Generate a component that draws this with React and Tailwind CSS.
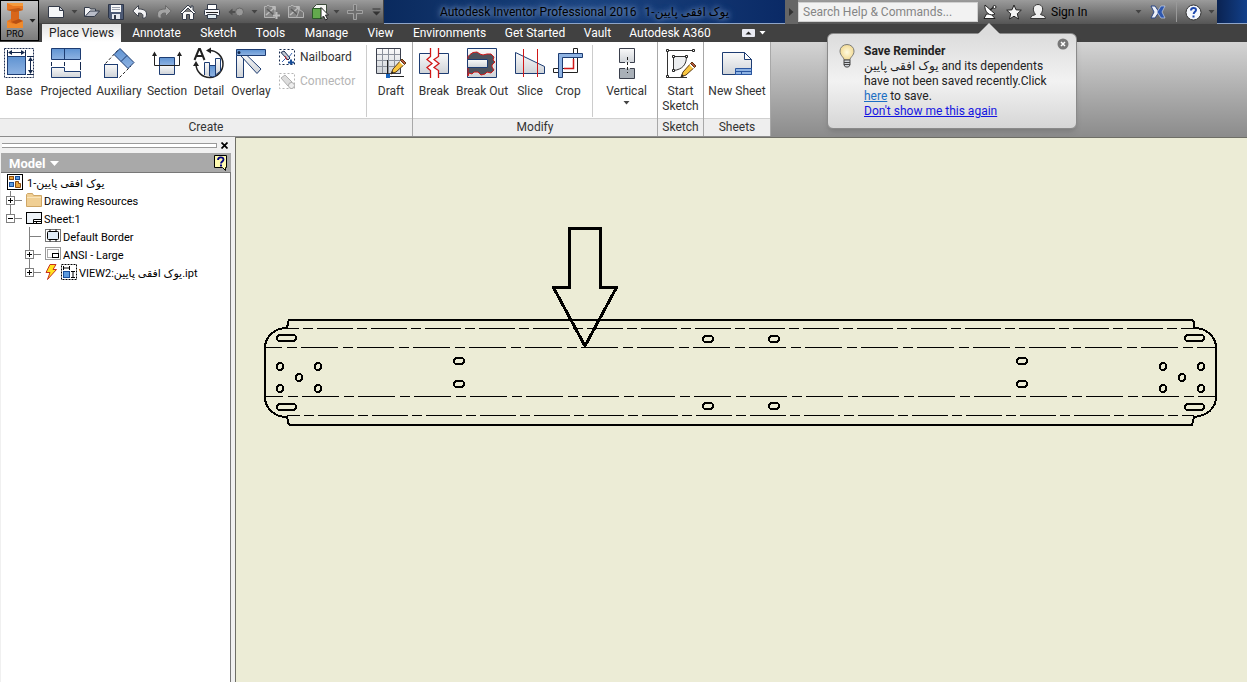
import React from 'react';
import clsx from 'clsx';

const FILE_NAME = 'یوک افقی پایین';

const TABS = [
    { label: 'Annotate', width: 'w-[69px]' },
    { label: 'Sketch', width: 'w-[55px]' },
    { label: 'Tools', width: 'w-[49px]' },
    { label: 'Manage', width: 'w-[63px]' },
    { label: 'View', width: 'w-[45px]' },
    { label: 'Environments', width: 'w-[93px]' },
    { label: 'Get Started', width: 'w-[78px]' },
    { label: 'Vault', width: 'w-[47px]' },
    { label: 'Autodesk A360', width: 'w-[98px]' },
];

function App() {
    return (
        <div className="min-h-screen flex flex-col bg-[#f0f0f0] text-[#333] font-['Roboto','DejaVu_Sans',sans-serif] text-[12px] leading-[15px] overflow-hidden">
            <Header />
            <Ribbon />
            <div className="flex-1 flex min-h-0">
                <ModelBrowser />
                <main className="flex-1 bg-[#ececd6] border-l border-t border-[#6e6e66]">
                    <SheetDrawing />
                </main>
            </div>
        </div>
    );
}

/* ---------- Title bar and tabs ---------- */

function Header() {
    return (
        <header className="relative flex h-[42px] shrink-0 bg-[#414141]">
            <button aria-label="Application menu" className="w-[39px] h-[41px] shrink-0 border border-black bg-linear-to-b from-[#c4c4c4] to-[#7b7b7b] flex items-center">
                <span className="w-7 flex flex-col items-center">
                    <svg width="18" height="27" viewBox="0 0 18 27">
                        <path d="M1 1h16v7l-4 1v8l4 2v7H1v-7l4-2V9L1 8z" fill="#e87722" />
                        <path d="M1 1l6 3h10V1z" fill="#f59a3c" />
                        <path d="M5 9l8-3v12l-8 2z" fill="#d9661a" />
                        <path d="M1 19l6 3 10-3v7H1z" fill="#f08a2c" />
                        <path d="M1 8l5-1 7-1 4 2-4 1-4 1z" fill="#c25a16" />
                        <path d="M13 17l4 2-7 3-5-2z" fill="#b84f12" />
                    </svg>
                    <span className="text-[9px] leading-[10px] text-black">PRO</span>
                </span>
                <Caret className="text-[#222]" />
            </button>
            <div className="flex-1 flex flex-col min-w-0">
                <div className="h-6 flex bg-[#0b2a63]">
                    <QuickAccess />
                    <div className="flex-1 flex items-center justify-center gap-2 pt-[2px] text-black border-b border-[#8fa5c8] bg-linear-to-r from-[#0a2a5e] via-[#1c437e] to-[#0a2a66] whitespace-nowrap [text-shadow:0_0_5px_#8ea9d2,0_0_9px_#7f9cca]">
                        <h1>Autodesk Inventor Professional 2016</h1>
                        <span dir="rtl">{FILE_NAME}-1</span>
                    </div>
                    <InfoCenter />
                    <div className="w-[30px] border-b border-[#8fa5c8] bg-linear-to-r from-[#0a2352] to-[#12408a]" />
                </div>
                <nav className="h-[18px] flex items-center pl-[3px] text-white whitespace-nowrap">
                    <button className="w-[79px] h-[18px] mr-px bg-linear-to-b from-[#e2e2e2] to-white text-[#222]">Place Views</button>
                    {TABS.map((tab) => (
                        <button key={tab.label} className={clsx('h-[18px]', tab.width)}>{tab.label}</button>
                    ))}
                    <button aria-label="Minimize ribbon" className="ml-[23px] flex items-center gap-1">
                        <svg width="13" height="8" viewBox="0 0 13 8">
                            <rect width="13" height="8" rx="1" fill="#e9eaf2" />
                            <path d="M3.5 5.5h6l-3-3z" fill="#222" />
                        </svg>
                        <Caret className="text-white" />
                    </button>
                </nav>
            </div>
            <SaveReminder />
        </header>
    );
}

function Caret({ className }) {
    return (
        <svg width="7" height="4" viewBox="0 0 7 4" className={clsx('shrink-0', className)}>
            <path d="M0.5 0h6L3.5 3.5z" fill="currentColor" />
        </svg>
    );
}

function ToolButton({ label, children, className = 'w-6' }) {
    return (
        <button aria-label={label} className={clsx('h-full shrink-0 flex items-center justify-center', className)}>
            {children}
        </button>
    );
}

function QuickAccess() {
    return (
        <div className="w-[345px] shrink-0 pl-[5px] flex items-center bg-linear-to-b from-[#9b9b9b] to-[#555] border-b border-r border-[#444]">
            <ToolButton label="New"><NewIcon /></ToolButton>
            <ToolButton label="New options" className="w-3"><Caret className="text-[#444]" /></ToolButton>
            <ToolButton label="Open"><OpenIcon /></ToolButton>
            <ToolButton label="Save"><SaveIcon /></ToolButton>
            <ToolButton label="Undo"><UndoIcon /></ToolButton>
            <ToolButton label="Redo"><RedoIcon /></ToolButton>
            <ToolButton label="Home"><HomeIcon /></ToolButton>
            <ToolButton label="Print"><PrintIcon /></ToolButton>
            <ToolButton label="Return"><ReturnIcon /></ToolButton>
            <ToolButton label="Return options" className="w-3"><Caret className="text-[#444]" /></ToolButton>
            <ToolButton label="Update"><UpdateIcon plus /></ToolButton>
            <ToolButton label="Update all"><UpdateIcon /></ToolButton>
            <ToolButton label="Select"><SelectIcon /></ToolButton>
            <ToolButton label="Select options" className="w-2"><Caret className="text-[#444]" /></ToolButton>
            <ToolButton label="Add" className="w-[30px]"><PlusIcon /></ToolButton>
            <ToolButton label="Customize" className="w-3">
                <svg width="9" height="8" viewBox="0 0 9 8"><path d="M0.5 1h8" stroke="#333" /><path d="M0.5 3.5h8l-4 4z" fill="#333" /></svg>
            </ToolButton>
        </div>
    );
}

function NewIcon() {
    return (
        <svg width="18" height="16" viewBox="0 0 18 16">
            <path d="M1.500 2.500h11l4 4v7h-15z" fill="#f5f6f8" stroke="#333a48" />
            <path d="M12.500 2.500v4h4z" fill="#cdd0d8" stroke="#333a48" />
        </svg>
    );
}

function OpenIcon() {
    return (
        <svg width="16" height="16" viewBox="0 0 16 16">
            <path d="M0.500 12.500v-9h5l1 1.500h5v2.500l-6 5z" fill="#f1f2f5" stroke="#333a48" />
            <path d="M1 12.500l5-5.500h9.500l-5 5.500z" fill="#b9bdc8" stroke="#333a48" />
        </svg>
    );
}

function SaveIcon() {
    return (
        <svg width="16" height="16" viewBox="0 0 16 16">
            <path d="M0.5 0.5h15v15h-13l-2-2z" fill="#4d5a75" stroke="#2d3547" />
            <rect x="3" y="1" width="10" height="7" fill="#f7f7f7" />
            <path d="M4 3.500h8M4 5.500h8" stroke="#9aa0ad" />
            <rect x="4" y="10" width="8" height="5" fill="#e6e8ee" />
            <rect x="6" y="11" width="2" height="4" fill="#333a48" />
        </svg>
    );
}

function UndoIcon() {
    return (
        <svg width="16" height="16" viewBox="0 0 16 16">
            <path d="M6.500 1.500v3.500c5 0 8 1.500 8 5 0 2-.5 3-1.500 4h-2.500c1-3 .5-5-4-5v3.500L0.800 7z" fill="#f3f3f5" stroke="#3f434c" />
        </svg>
    );
}

function RedoIcon() {
    return (
        <svg width="16" height="16" viewBox="0 0 16 16">
            <path d="M9.500 1.500v3.500c-5 0-8 1.500-8 5 0 2 .5 3 1.500 4h2.500c-1-3-.5-5 4-5v3.500L15.200 7z" fill="#a4a4a4" stroke="#6a6a6a" />
        </svg>
    );
}

function HomeIcon() {
    return (
        <svg width="16" height="16" viewBox="0 0 16 16">
            <path d="M2.500 8v7.500h4v-5h3v5h4V8" fill="#f7f7f7" stroke="#333a48" />
            <path d="M0.500 8.500L8 1l3 3V2h2v4l2.500 2.500-1.500 1.500L8 4l-6 6z" fill="#f7f7f7" stroke="#333a48" />
        </svg>
    );
}

function PrintIcon() {
    return (
        <svg width="16" height="16" viewBox="0 0 16 16">
            <path d="M3.500 6V0.500h9V6" fill="#fff" stroke="#333a48" />
            <rect x="0.500" y="5.500" width="15" height="6" rx="1" fill="#f4f5f8" stroke="#333a48" />
            <path d="M2 8.500h12" stroke="#222" />
            <path d="M3.500 10.500h9v4h-9z" fill="#dfeaf0" stroke="#333a48" />
        </svg>
    );
}

function ReturnIcon() {
    return (
        <svg width="16" height="16" viewBox="0 0 16 16">
            <path d="M0.500 8l4-3.500v2.500h3v2h-3v2.500z" fill="#4f4f4f" />
            <circle cx="11.500" cy="8" r="4" fill="#999" stroke="#666" />
        </svg>
    );
}

function UpdateIcon({ plus }) {
    return (
        <svg width="16" height="16" viewBox="0 0 16 16">
            <path d="M0.500 2.500h2l1.500-1.500 2 1.500h5v11h-10.500z" fill="#838383" stroke="#b4b4b4" />
            <path d="M2 11l8-7M8 3h3v3" stroke="#bcbcbc" strokeWidth="1.500" fill="none" />
            <path d="M3 5l8 7" stroke="#5c5c5c" strokeWidth="1.500" />
            {plus ? <path d="M12.500 8v7M9 11.500h7" stroke="#bcbcbc" strokeWidth="2" /> : <path d="M8.500 13.500l3-8 4 3v5z" fill="#777" stroke="#b4b4b4" />}
        </svg>
    );
}

function SelectIcon() {
    return (
        <svg width="18" height="18" viewBox="0 0 18 18">
            <path d="M1.500 5.500l4-4h10v10l-4 4" fill="#f4f6f2" stroke="#3c4a3a" />
            <path d="M1.500 5.500h9.500v10H1.500z" fill="#63a94d" stroke="#2c5a28" />
            <path d="M10 4.500v11l2.500-2.500 2 4 2-1-2-4h3z" fill="#fff" stroke="#222" />
        </svg>
    );
}

function PlusIcon() {
    return (
        <svg width="16" height="16" viewBox="0 0 16 16">
            <path d="M6.500 0.500h3v6h6v3h-6v6h-3v-6h-6v-3h6z" fill="#6f6f6f" stroke="#a2a2a2" />
        </svg>
    );
}

function InfoCenter() {
    return (
        <div className="w-[432px] shrink-0 flex items-center bg-linear-to-b from-[#9b9b9b] to-[#555] text-black">
            <button aria-label="Collapse search" className="w-[13px] h-full flex items-center justify-center bg-[#666]">
                <svg width="5" height="8" viewBox="0 0 5 8"><path d="M0 0v8l4.500-4z" fill="#333" /></svg>
            </button>
            <input aria-label="Search help" placeholder="Search Help & Commands..." className="w-[180px] h-5 px-1 bg-[#f2f2f2] border border-[#d0d0d0] placeholder:text-[#858585] outline-none" />
            <ToolButton label="Communication center">
                <svg width="14" height="16" viewBox="0 0 14 16">
                    <path d="M3.500 10L1 14.500h11L8 10z" fill="#fff" stroke="#222" />
                    <path d="M2 1l10 9c-5 3-11-2-10-9z" fill="#fff" stroke="#222" />
                    <path d="M7 6l4-3" stroke="#222" strokeWidth="1.500" />
                    <circle cx="11.500" cy="3" r="1.500" fill="#fff" stroke="#222" />
                </svg>
            </ToolButton>
            <ToolButton label="Favorites">
                <svg width="16" height="16" viewBox="0 0 16 16">
                    <path d="M8 1l2 4.800 5.300.4-4 3.500 1.200 5.300L8 12.200 3.500 15l1.200-5.300-4-3.500L6 5.800z" fill="#f5f5f5" stroke="#222" />
                </svg>
            </ToolButton>
            <button className="flex h-full items-center gap-1 pl-1">
                <svg width="17" height="16" viewBox="0 0 17 16">
                    <path d="M0.500 14.500c0-3 3-3 5-4-4-5-2-10 2.500-10s6.500 5 2.500 10c2 1 5 1 5 4z" fill="#f0f0f0" stroke="#333" />
                </svg>
                <span className="pt-px">Sign In</span>
            </button>
            <span className="flex-1" />
            <ToolButton label="Sign in options" className="w-3"><Caret className="text-[#444]" /></ToolButton>
            <ToolButton label="Exchange apps" className="w-7">
                <svg width="16" height="14" viewBox="0 0 16 14">
                    <path d="M1 1h4l4 6-4 6H1l3-6z" fill="#eef1f8" stroke="#2a4684" />
                    <path d="M15 1h-4L7 7l4 6h4l-3-6z" fill="#2e57ae" stroke="#c7d2ea" strokeWidth="0.700" />
                </svg>
            </ToolButton>
            <span className="w-px h-5 mx-1 bg-[#999]" />
            <ToolButton label="Help" className="w-6">
                <svg width="17" height="17" viewBox="0 0 17 17">
                    <circle cx="8.500" cy="8.500" r="7.500" fill="#f4f7fd" stroke="#333" />
                    <path d="M6 6.500c0-3.500 5-3.300 5-.5 0 1.800-2.300 1.800-2.300 4" fill="none" stroke="#1d48ae" strokeWidth="2" />
                    <rect x="7.500" y="11.500" width="2" height="2" fill="#1d48ae" />
                </svg>
            </ToolButton>
            <ToolButton label="Help options" className="w-3"><Caret className="text-[#444]" /></ToolButton>
        </div>
    );
}

function SaveReminder() {
    return (
        <aside className="absolute z-10 right-[170px] top-[33px] w-[250px] h-24 rounded-md border border-[#8a8a8a] bg-linear-to-b from-[#dcdcdc] via-[#f2f2f2] to-[#d6d6d6] flex pl-[11px] pt-2.5 gap-2 text-[#222] shadow-md">
            <svg width="24" height="12" viewBox="0 0 24 12" className="absolute -top-[11px] left-[149px]">
                <path d="M0 12L12 0l12 12z" fill="#dcdcdc" />
            </svg>
            <svg width="17" height="25" viewBox="0 0 17 25" className="shrink-0">
                <defs>
                    <radialGradient id="bulb"><stop offset="0" stopColor="#fffbe0" /><stop offset="1" stopColor="#f2da94" /></radialGradient>
                </defs>
                <path d="M5 16c0-3-4-4-4-9a7 6.500 0 0 1 14 0c0 5-4 6-4 9z" fill="url(#bulb)" stroke="#7d7d78" />
                <path d="M5 16h6v5l-1.500 2h-3L5 21z" fill="#d0d4da" stroke="#444" />
                <path d="M5 18.500h6M5 20.500h6" stroke="#444" />
            </svg>
            <div className="whitespace-nowrap">
                <h2 className="font-bold">Save Reminder</h2>
                <p><bdi>{FILE_NAME}</bdi> and its dependents</p>
                <p>have not been saved recently.Click</p>
                <p><a href="#save" className="text-[#1c6fc4] underline">here</a> to save.</p>
                <a href="#dismiss" className="text-[#1515e0] underline">Don't show me this again</a>
            </div>
            <button aria-label="Close" className="absolute right-[7px] top-1">
                <svg width="12" height="12" viewBox="0 0 12 12">
                    <circle cx="6" cy="6" r="5.500" fill="#777" />
                    <path d="M4 4l4 4M8 4l-4 4" stroke="#fff" strokeWidth="1.500" />
                </svg>
            </button>
        </aside>
    );
}

/* ---------- Ribbon ---------- */

function Ribbon() {
    return (
        <section className="h-[95px] shrink-0 flex bg-linear-to-b from-[#d4d4d4] to-[#8c8c8c] border-b border-[#8c8c8c]">
            <Panel title="Create" className="w-[413px]">
                <RibbonButton label="Base" className="w-[38px]"><BaseIcon /></RibbonButton>
                <RibbonButton label="Projected" className="w-14"><ProjectedIcon /></RibbonButton>
                <RibbonButton label="Auxiliary" className="w-[50px]"><AuxiliaryIcon /></RibbonButton>
                <RibbonButton label="Section" className="w-[46px]"><SectionIcon /></RibbonButton>
                <RibbonButton label="Detail" className="w-[38px]"><DetailIcon /></RibbonButton>
                <RibbonButton label="Overlay" className="w-[46px]"><OverlayIcon /></RibbonButton>
                <div className="flex-1 pl-[5px] pt-[7px] flex flex-col gap-[7px]">
                    <button className="flex items-center gap-1"><NailboardIcon /> Nailboard</button>
                    <button disabled className="flex items-center gap-1 text-[#b5b5b5]"><ConnectorIcon /> Connector</button>
                </div>
                <Divider />
                <span className="w-[3px]" />
                <RibbonButton label="Draft" className="w-[42px]"><DraftIcon /></RibbonButton>
            </Panel>
            <Panel title="Modify" className="w-[245px]">
                <RibbonButton label="Break" className="w-[42px]"><BreakIcon /></RibbonButton>
                <RibbonButton label="Break Out" className="w-[54px]"><BreakOutIcon /></RibbonButton>
                <RibbonButton label="Slice" className="w-[42px]"><SliceIcon /></RibbonButton>
                <RibbonButton label="Crop" className="w-[34px]"><CropIcon /></RibbonButton>
                <span className="w-[7px]" />
                <Divider />
                <span className="w-[3px]" />
                <RibbonButton label="Vertical" className="flex-1" menu><VerticalIcon /></RibbonButton>
            </Panel>
            <Panel title="Sketch" className="w-[46px]">
                <RibbonButton label="Start Sketch" className="w-full"><StartSketchIcon /></RibbonButton>
            </Panel>
            <Panel title="Sheets" className="w-[67px]">
                <RibbonButton label="New Sheet" className="w-full"><NewSheetIcon /></RibbonButton>
            </Panel>
        </section>
    );
}

function Panel({ title, className, children }) {
    return (
        <div className={clsx('shrink-0 flex flex-col bg-white border-r border-[#a8a8a8]', className)}>
            <div className="flex-1 flex">{children}</div>
            <div className="h-[18px] pt-px border-t border-[#d0d0d0] bg-[#eee] text-center">{title}</div>
        </div>
    );
}

function Divider() {
    return <span className="w-px h-[72px] mt-[3px] bg-[#ccc]" />;
}

function RibbonButton({ label, className, menu, children }) {
    return (
        <button className={clsx('flex flex-col items-center pt-[5px] text-center', className)}>
            {children}
            <span className={clsx('mt-[5px]', label !== 'Start Sketch' && 'whitespace-nowrap')}>{label}</span>
            {menu && <Caret className="mt-[2px] text-[#444]" />}
        </button>
    );
}

function Icon({ children }) {
    return (
        <svg width="32" height="32" viewBox="0 0 32 32" fill="none" className="shrink-0">
            <defs>
                <linearGradient id="blue" x1="0" y1="0" x2="0" y2="1"><stop offset="0" stopColor="#5f93d2" /><stop offset="1" stopColor="#8fb3e2" /></linearGradient>
                <linearGradient id="grey" x1="0" y1="0" x2="0" y2="1"><stop offset="0" stopColor="#fafafa" /><stop offset="1" stopColor="#cfd3d8" /></linearGradient>
            </defs>
            {children}
        </svg>
    );
}

function BaseIcon() {
    return (
        <Icon>
            <rect x="1.500" y="1.500" width="29" height="29" stroke="#1f2f52" strokeDasharray="2 1" />
            <rect x="4.500" y="9.500" width="18" height="18" fill="url(#blue)" stroke="#1d3c72" />
            <path d="M4.500 3v6M22.500 3v6M24 9.500h6M24 27.500h6M6 5.500h15M27.500 11v15" stroke="#14284c" />
            <path d="M5 5.500l4-2.500v5zM22 5.500l-4-2.500v5zM27.500 10l-2.500 4h5zM27.500 27l-2.500-4h5z" fill="#14284c" />
        </Icon>
    );
}

function ProjectedIcon() {
    return (
        <Icon>
            <path d="M1.500 1.500h29v11h-29zM14.500 1.500v11" fill="url(#blue)" stroke="#1d3c72" />
            <path d="M1.500 15v4M14.500 15v4M30.500 15v8" stroke="#14284c" />
            <path d="M1.500 20.500h13v4h16v6h-29z" fill="url(#grey)" stroke="#1d3c72" />
        </Icon>
    );
}

function AuxiliaryIcon() {
    return (
        <Icon>
            <path d="M2.500 16.500L16 2M16.500 30.500L28 19" stroke="#222" strokeDasharray="3 2" />
            <rect x="1.500" y="17.500" width="13" height="13" fill="url(#grey)" stroke="#1d3c72" />
            <path d="M17 1.500L31 15.500l-6 6L11 7.500z" fill="url(#blue)" stroke="#1d3c72" />
            <path d="M24 8.500l-6 6" stroke="#1d3c72" />
        </Icon>
    );
}

function SectionIcon() {
    return (
        <Icon>
            <path d="M8.500 18.500h15v9h-15z" fill="url(#grey)" stroke="#1d3c72" />
            <path d="M8.500 10.500h15v8h-15z" fill="url(#blue)" stroke="#1d3c72" />
            <path d="M3.500 7v11.500h25V7" stroke="#222" />
            <path d="M3.500 4.500L1 9h5zM28.500 4.500L26 9h5z" fill="#222" />
        </Icon>
    );
}

function DetailIcon() {
    return (
        <Icon>
            <path d="M1.500 13L6 2h1l4.500 11M3 9h7" stroke="#222" strokeWidth="2" />
            <path d="M16 3.500a13.500 13.500 0 1 1-13 14" stroke="#222" strokeWidth="1.500" />
            <path d="M13 3.500l5-3v6zM3 14l-3 5h6z" fill="#222" />
            <path d="M11.500 28V15.500h5V29" fill="url(#grey)" stroke="#1d3c72" />
            <path d="M16.500 18.500h6V29c-2 1-4 1-6 0z" fill="url(#blue)" stroke="#1d3c72" />
            <path d="M22.500 28V11.500h5V24z" fill="url(#grey)" stroke="#1d3c72" />
        </Icon>
    );
}

function OverlayIcon() {
    return (
        <Icon>
            <path d="M1.500 8.500h7v22h-7z" fill="url(#grey)" stroke="#1d3c72" />
            <path d="M9.500 6L26 22l-4 4.500L6 9z" fill="url(#grey)" stroke="#1d3c72" />
            <path d="M1.500 8.500V2.500h29v6z" fill="url(#blue)" stroke="#1d3c72" />
            <circle cx="4" cy="5.500" r="1.500" fill="#14284c" />
        </Icon>
    );
}

function NailboardIcon() {
    return (
        <svg width="17" height="17" viewBox="0 0 17 17" fill="none" className="shrink-0">
            <rect x="0.500" y="0.500" width="15" height="15" stroke="#14284c" strokeDasharray="2 2" />
            <path d="M2 3.500l3-1.500 6 7-2 2z" fill="#c5cad3" stroke="#14284c" />
            <path d="M7 9l-4 4M10 8l3-4" stroke="#3c65b0" />
            <path d="M6 7l2 4" stroke="#c22" />
            <path d="M9 13.500h6M12 10.500v5" stroke="#174c97" strokeWidth="2" />
        </svg>
    );
}

function ConnectorIcon() {
    return (
        <svg width="17" height="17" viewBox="0 0 17 17" fill="none" className="shrink-0">
            <rect x="0.500" y="0.500" width="15" height="15" stroke="#b5b5b5" strokeDasharray="2 2" />
            <path d="M2 5l4-3 7 7-4 4z" fill="#ddd" stroke="#b0b0b0" />
            <circle cx="12.500" cy="12.500" r="3" fill="#eee" stroke="#aaa" />
        </svg>
    );
}

function Pencil({ x, y }) {
    return (
        <g transform={`translate(${x} ${y})`}>
            <path d="M0 15l2-5L11 0l4 4-10 9z" fill="#f9c63f" stroke="#5c3b12" />
            <path d="M9 2l4 4" stroke="#fff" strokeWidth="2" />
            <path d="M11 0l4 4-1.500 1.500-4-4z" fill="#b5533c" stroke="#5c3b12" />
            <path d="M0 15l1-3 2 2z" fill="#222" />
        </g>
    );
}

function DraftIcon() {
    return (
        <Icon>
            <path d="M1.500 1.500h24v25h-24z" fill="url(#grey)" stroke="#3a3f4c" />
            <path d="M7.500 2v24M13.500 2v24M19.500 2v24M2 7.500h23M2 13.500h23M2 19.500h23" stroke="#8c919b" />
            <path d="M12.500 13v14M14 29.500h15" stroke="#222" />
            <rect x="11" y="27" width="4" height="4" fill="#1763bd" />
            <Pencil x="16" y="12" />
        </Icon>
    );
}

function BreakIcon() {
    return (
        <Icon>
            <path d="M12.500 6.500h-11v20h11v-3l-3-3 5-4-5-4 3-3z" fill="url(#grey)" />
            <path d="M20.500 6.500h10v20h-10v-3l-4-3 5-4-5-4 4-3z" fill="url(#grey)" />
            <path d="M12 6.500H1.500v20H12M20 6.500h10.500v20H20" stroke="#1d3c72" />
            <path d="M12.500 1v8.500l-3.500 3 5 4-5 4 3.500 3V31M20.500 1v8.500l-4.500 3 5 4-5 4 4.500 3V31" stroke="#d01818" strokeWidth="1.300" />
        </Icon>
    );
}

function BreakOutIcon() {
    return (
        <Icon>
            <path d="M1.500 1.500h29v29h-29z" fill="url(#grey)" stroke="#1d3c72" />
            <path d="M2 9.500l2-2 3-2 4-.5 3 2 3 1 4-1 4 0 3 3-1 3 2 2-3 3 0 2 2 3-3 3-4-1-2 2-4 1-3-3-4 0-2 2-3-1-1 3z" fill="#4d525d" stroke="#d01818" />
            <path d="M1.500 12.500h20v8h-20z" fill="url(#grey)" stroke="#1d3c72" />
        </Icon>
    );
}

function SliceIcon() {
    return (
        <Icon>
            <path d="M1.500 5.500l29 14v7h-29z" fill="url(#grey)" stroke="#1d3c72" />
            <path d="M9.500 2v28M23.500 2v28" stroke="#d01818" />
        </Icon>
    );
}

function CropIcon() {
    return (
        <Icon>
            <path d="M21.500 1.500h4v24h-24v-4h20z" fill="#fff" stroke="#222" />
            <path d="M12 21.500h9.500V12" stroke="#d01818" strokeWidth="1.500" />
            <path d="M6.500 30.500v-24h24v4h-20v20z" fill="#8fb3e2" stroke="#1d3c72" />
        </Icon>
    );
}

function VerticalIcon() {
    return (
        <Icon>
            <path d="M14 15.500H8.500v-14h15v14H19" fill="url(#grey)" stroke="#3a3f4c" />
            <path d="M14 21.500H8.500v10h15v-10H19" fill="#a9b0b8" stroke="#3a3f4c" />
            <path d="M16.500 10v16" stroke="#222" strokeDasharray="3 2" />
        </Icon>
    );
}

function StartSketchIcon() {
    return (
        <Icon>
            <path d="M29 3.500H2.500v27H22" stroke="#333" />
            <path d="M8.500 9.500h13c0 8-4 13-13 14z" fill="#eceef0" stroke="#333" />
            <path d="M1.500 2.500h2v2h-2zM27.500 2.500h2v2h-2zM1.500 28.500h2v2h-2zM7.500 8.500h2v2h-2zM20.500 8.500h2v2h-2zM7.500 22.500h2v2h-2z" fill="#fff" stroke="#222" />
            <Pencil x="16" y="15" />
        </Icon>
    );
}

function NewSheetIcon() {
    return (
        <Icon>
            <path d="M1.500 5.500h22l7 7v15h-29z" fill="url(#grey)" stroke="#1d3c72" />
            <path d="M23.500 5.500v7h7z" fill="#fff" stroke="#1d3c72" />
            <path d="M14.500 21.500h16v6h-16zM14.500 24.500h16M20.500 24.500v3" fill="#8fb3e2" stroke="#2a56a0" />
        </Icon>
    );
}

/* ---------- Model browser ---------- */

function ModelBrowser() {
    return (
        <aside className="w-[235px] shrink-0 pr-1 pl-px flex flex-col text-[11px] text-black">
            <div className="h-4 flex items-center gap-1 pl-px pr-[2px]">
                <span className="flex-1 h-[5px] border-y border-r border-[#999] bg-white" />
                <button aria-label="Close browser" className="w-2">
                    <svg width="7" height="7" viewBox="0 0 7 7"><path d="M0.500 0.500l6 6M6.500 0.500l-6 6" stroke="#000" strokeWidth="1.700" /></svg>
                </button>
            </div>
            <div className="h-5 flex items-center justify-between pl-2 pr-[3px] bg-[#a9a9a9] border-b border-[#777]">
                <button className="flex items-center gap-1 pt-px font-bold text-[13px] text-white">
                    Model
                    <svg width="9" height="5" viewBox="0 0 9 5"><path d="M0 0h9L4.500 5z" fill="#fff" /></svg>
                </button>
                <button aria-label="Browser help">
                    <svg width="14" height="16" viewBox="0 0 14 16">
                        <path d="M0.500 0.500h12v12h-1v3l-3-3h-8z" fill="#fffbb0" stroke="#000" />
                        <path d="M4 5c0-3.500 5.500-3.500 5.500-.5C9.500 6.500 7 6.500 7 8.500" fill="none" stroke="#000080" strokeWidth="1.800" />
                        <rect x="6" y="9.500" width="2" height="2" fill="#000080" />
                    </svg>
                </button>
            </div>
            <ul className="flex-1 bg-white border-r border-[#777] whitespace-nowrap">
                <li>
                    <div className="h-[18px] flex items-center gap-1 pl-[6px]">
                        <DrawingIcon />
                        <span dir="rtl" className="pt-[2px]">{FILE_NAME}-1</span>
                    </div>
                    <ul className="pl-px">
                        <TreeItem toggle="+" below icon={<FolderIcon />} label="Drawing Resources" />
                        <TreeItem toggle="-" icon={<SheetIcon />} label="Sheet:1">
                            <TreeItem below icon={<BorderIcon />} label="Default Border" />
                            <TreeItem toggle="+" below icon={<TitleBlockIcon />} label="ANSI - Large" />
                            <TreeItem toggle="+" icon={<><BoltIcon /><ViewIcon /></>} label={`VIEW2:${FILE_NAME}.ipt`} />
                        </TreeItem>
                    </ul>
                </li>
            </ul>
        </aside>
    );
}

function TreeItem({ toggle, below, icon, label, children }) {
    const branch = (
        <svg width="20" height="18" viewBox="0 0 20 18" fill="none">
            <path d={below ? 'M8.500 0v18M8.500 9.500h12' : 'M8.500 0v9.500h12'} stroke="#808080" />
            {toggle && <rect x="4.500" y="5.500" width="8" height="8" fill="#fff" stroke="#808080" />}
            {toggle && <path d={toggle === '+' ? 'M6 9.500h5M8.500 7v5' : 'M6 9.500h5'} stroke="#000" />}
        </svg>
    );

    return (
        <li>
            <div className="h-[18px] flex items-center">
                {toggle ? <button aria-label={`Toggle ${label}`} className="mr-1">{branch}</button> : <span className="mr-1">{branch}</span>}
                <span className="flex items-center gap-1 mr-[2px]">{icon}</span>
                <span className="pt-[2px]">{label}</span>
            </div>
            {children && <ul className="pl-[19px]">{children}</ul>}
        </li>
    );
}

function DrawingIcon() {
    return (
        <svg width="16" height="16" viewBox="0 0 16 16">
            <rect x="0.500" y="0.500" width="15" height="15" fill="#fff" stroke="#000" />
            <rect x="2.500" y="2.500" width="4" height="3" fill="#e8a33c" stroke="#8a4a10" />
            <rect x="8.500" y="2.500" width="4" height="3" fill="#5c9ade" stroke="#174c97" />
            <rect x="2.500" y="8.500" width="4" height="4" fill="#5c9ade" stroke="#174c97" />
            <path d="M8.500 7.500h3v2h2v4h-5z" fill="#e8a33c" stroke="#8a4a10" />
        </svg>
    );
}

function FolderIcon() {
    return (
        <svg width="16" height="16" viewBox="0 0 16 16">
            <path d="M0.500 14.500v-12l1-1h5l1 2h8v11z" fill="#f0cf94" stroke="#cfa665" />
            <path d="M1 5.500h14" stroke="#f9e4b9" />
        </svg>
    );
}

function SheetIcon() {
    return (
        <svg width="16" height="16" viewBox="0 0 16 16">
            <rect x="0.500" y="2.500" width="15" height="11" fill="#eef3f8" stroke="#000" />
            <path d="M7.500 9.500h8v4h-8zM7.500 11.500h8M10.500 11.500v2" fill="#fff" stroke="#000" />
        </svg>
    );
}

function BorderIcon() {
    return (
        <svg width="16" height="14" viewBox="0 0 16 14">
            <rect x="0.500" y="0.500" width="15" height="12" fill="#fff" stroke="#777" />
            <rect x="2.500" y="2.500" width="11" height="8" rx="1" fill="#dfeaf5" stroke="#000" />
            <path d="M5 0.500v2M11 0.500v2M5 10v2.500M11 10v2.500" stroke="#000" />
        </svg>
    );
}

function TitleBlockIcon() {
    return (
        <svg width="16" height="14" viewBox="0 0 16 14">
            <rect x="0.500" y="0.500" width="15" height="12" fill="#fff" stroke="#999" />
            <rect x="2.500" y="2.500" width="11" height="8" fill="#fff" stroke="#aaa" />
            <rect x="7.500" y="6.500" width="6" height="4" fill="#fff" stroke="#000" />
        </svg>
    );
}

function BoltIcon() {
    return (
        <svg width="12" height="16" viewBox="0 0 12 16">
            <path d="M5 0.500h6L8 5.500h3.500l-9 10 2.500-7H1z" fill="#ffe21f" stroke="#c8301c" />
        </svg>
    );
}

function ViewIcon() {
    return (
        <svg width="16" height="16" viewBox="0 0 16 16" fill="none">
            <rect x="0.500" y="0.500" width="15" height="15" stroke="#000" strokeDasharray="2 1" />
            <rect x="2.500" y="7.500" width="6" height="6" fill="#5c9ade" stroke="#174c97" />
            <path d="M2.500 2v4M8.500 2v4M3 4h5M10 7.500h4M10 13.500h4M12 8v5" stroke="#000" />
        </svg>
    );
}

/* ---------- Drawing sheet ---------- */

const SMALL_HOLES = [
    [277, 363], [315, 363], [296, 374], [277, 385], [315, 385],
    [1160, 363], [1198, 363], [1179, 374], [1160, 385], [1198, 385],
];

const OBLONG_HOLES = [
    [454, 358], [454, 381], [1017, 358], [1017, 381],
    [703, 336], [769, 336], [703, 403], [769, 403],
];

const SLOTS = [[277, 335], [277, 404], [1185, 335], [1185, 404]];

function SheetDrawing() {
    return (
        <svg viewBox="236 138 1011 544" preserveAspectRatio="xMinYMin meet" className="block w-full h-auto" fill="none" stroke="#000" strokeWidth="2" shapeRendering="crispEdges">
            {/* plate outline */}
            <path d="M290 320H1191q3 0 3 4v4c13 0 22 9 22 20V397c0 11-9 19-22 20l-2 8H290q-2 0-2-4l-1-4c-13 0-22-9-22-20V348c0-11 9-20 22-20l1-5q0-3 2-3z" />
            {/* bend lines */}
            <g strokeWidth="1">
                <path d="M287 328.500H1194" strokeDasharray="36 4 10 4" strokeDashoffset="24" />
                <path d="M265 347.500H1216" strokeDasharray="37 5 10 4" strokeDashoffset="20" />
                <path d="M265 396.500H1216" strokeDasharray="37 5 10 4" strokeDashoffset="19" />
                <path d="M287 415.500H1194" strokeDasharray="36 4 10 4" strokeDashoffset="23" />
            </g>
            {SLOTS.map(([x, y]) => <rect key={`${x}-${y}`} x={x} y={y} width="19" height="6" rx="3" />)}
            {SMALL_HOLES.map(([x, y]) => <rect key={`${x}-${y}`} x={x} y={y} width="6" height="7" rx="3" />)}
            {OBLONG_HOLES.map(([x, y]) => <rect key={`${x}-${y}`} x={x} y={y} width="10" height="6" rx="3" />)}
            {/* view direction arrow */}
            <path d="M569.500 228.500H600.500V287.500H616.500L585 346 553.500 287.500H569.500Z" strokeWidth="3" strokeLinejoin="round" />
        </svg>
    );
}

export default App;
